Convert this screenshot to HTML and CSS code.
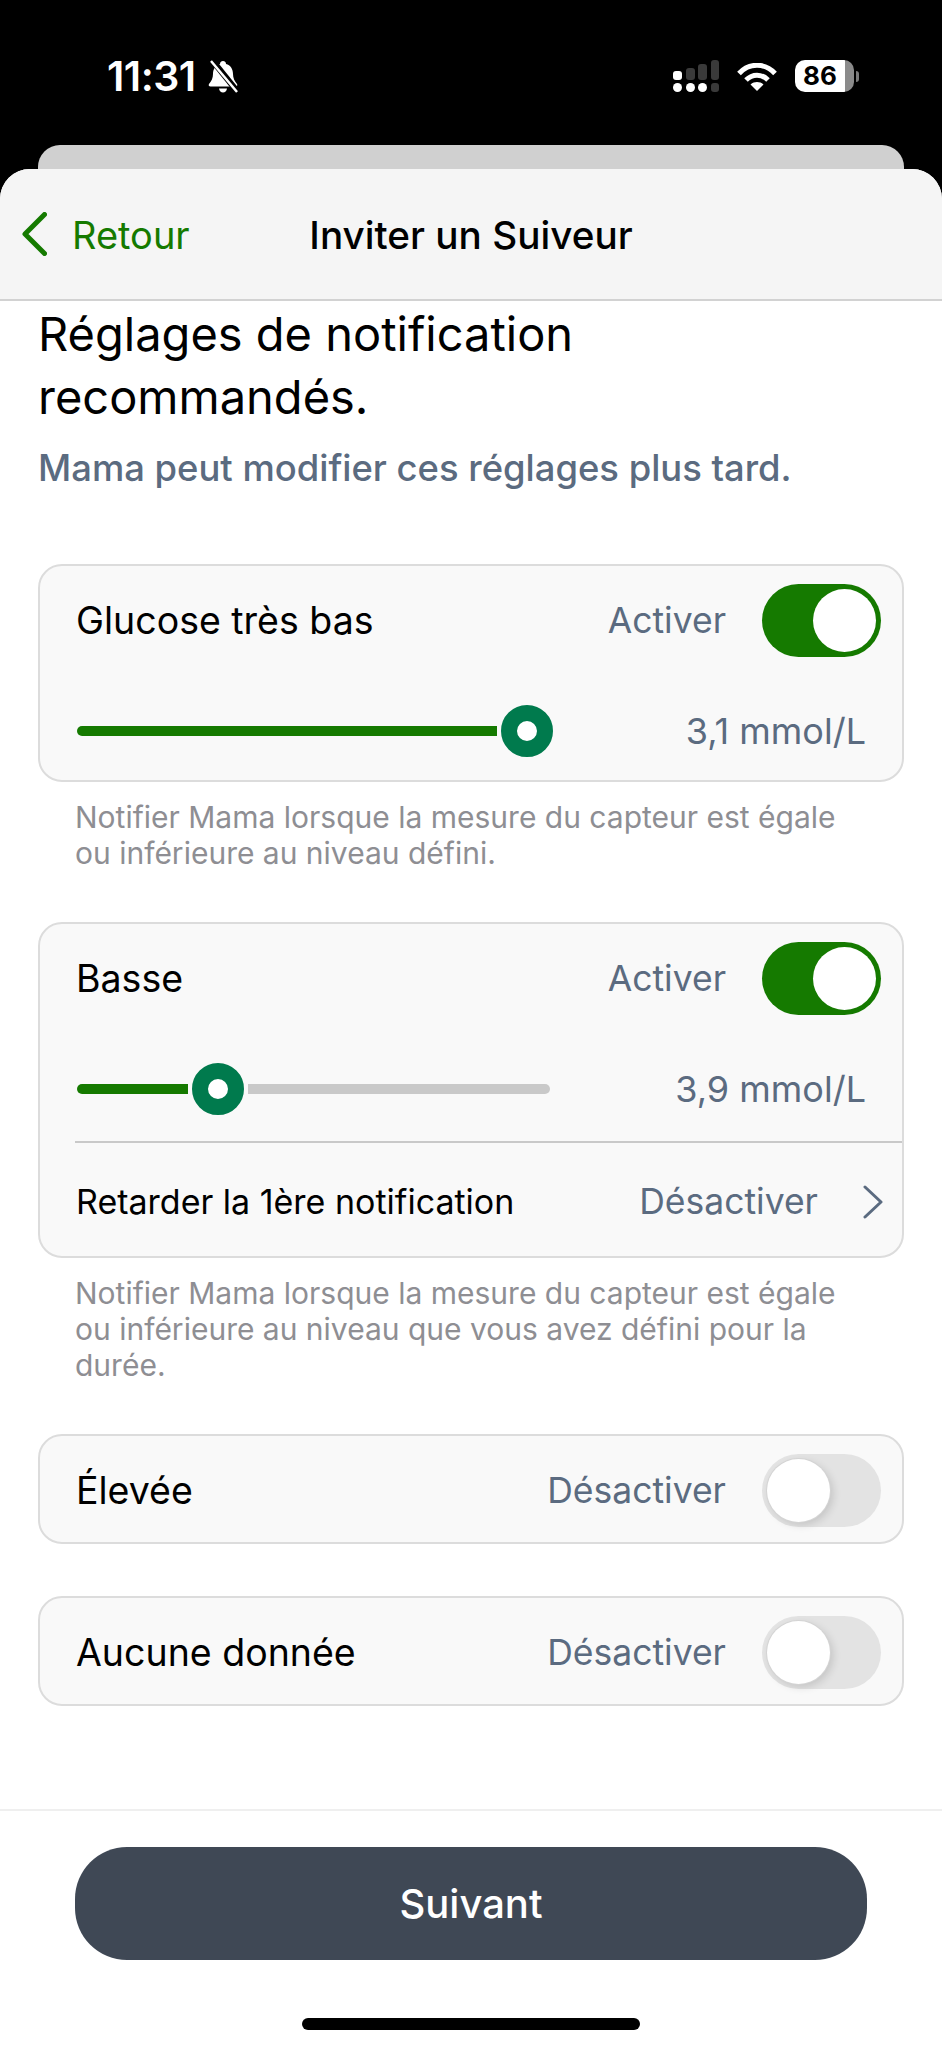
FILE: index.html
```html
<!DOCTYPE html>
<html lang="fr">
<head>
    <meta charset="UTF-8">
    <meta name="viewport" content="width=device-width, initial-scale=1.0">
    <title>Inviter un Suiveur</title>
    <link rel="stylesheet" href="styles.css">
</head>
<body>
    <!-- Status bar -->
    <div class="status-bar">
        <div class="status-left">
            <span class="clock">11:31</span>
            <svg class="bell" viewBox="0 0 30 33" width="30" height="33">
                <path fill="#fff" d="M15 1c2 0 3 1.400 3 3 4.500 1.200 7 5 7 10 0 4 1.500 7 4 10 .8 1.200 0 2.500-1.500 2.500H2.500C1 26.500.2 25.200 1 24c2.500-3 4-6 4-10 0-5 2.500-8.800 7-10 0-1.600 1-3 3-3z"/>
                <path fill="#fff" d="M11 28.500h8c-.4 2.500-2 4-4 4s-3.600-1.500-4-4z"/>
                <path stroke="#000" stroke-width="6" d="M4 0l25 31"/>
                <path stroke="#fff" stroke-width="2.500" d="M3 1l26 31"/>
            </svg>
        </div>
        <div class="status-right">
            <svg class="signal" viewBox="0 0 46 32" width="46" height="32">
                <rect x="0" y="11" width="9" height="9" rx="3" fill="#fff"/>
                <rect x="13" y="8" width="9" height="12" rx="3" fill="#3a3a3a"/>
                <rect x="25" y="4" width="9" height="16" rx="3" fill="#3a3a3a"/>
                <rect x="38" y="0" width="8" height="20" rx="3" fill="#3a3a3a"/>
                <circle cx="4.500" cy="27.500" r="4.500" fill="#fff"/>
                <circle cx="17.500" cy="27.500" r="4.500" fill="#fff"/>
                <circle cx="29.500" cy="27.500" r="4.500" fill="#fff"/>
                <rect x="38" y="23" width="8" height="9" rx="3" fill="#3a3a3a"/>
            </svg>
            <svg class="wifi" viewBox="0 0 40 28" width="40" height="28">
                <path fill="none" stroke="#fff" stroke-width="5" d="M2 10.500C12-.5 28-.5 38 10.500"/>
                <path fill="none" stroke="#fff" stroke-width="5" d="M9 17c6.500-6.500 15.500-6.500 22 0"/>
                <path fill="#fff" d="M13.500 21.500c4-3.200 9-3.200 13 0L20 28z"/>
            </svg>
            <div class="battery">
                <div class="battery-body">86</div>
                <div class="battery-tip"></div>
            </div>
        </div>
    </div>

    <div class="sheet-behind"></div>

    <div class="sheet">
        <div class="nav-bar">
            <svg class="back-icon" viewBox="0 0 25 44" width="25" height="44">
                <path fill="none" stroke="#157a00" stroke-width="5" stroke-linecap="round" stroke-linejoin="round" d="M22.500 2.500L3 22l19.500 19.500"/>
            </svg>
            <span class="back-label">Retour</span>
            <span class="nav-title">Inviter un Suiveur</span>
        </div>

        <div class="content">
            <h1>Réglages de notification recommandés.</h1>
            <p class="subtitle">Mama peut modifier ces réglages plus tard.</p>

            <!-- Glucose tres bas -->
            <div class="card card-first">
                <div class="row-top">
                    <span class="label">Glucose très bas</span>
                    <span class="state">Activer</span>
                    <div class="toggle on"><div class="toggle-knob"></div></div>
                </div>
                <div class="row-slider">
                    <div class="slider">
                        <div class="track-fill" style="width: 420px"></div>
                        <div class="slider-knob"></div>
                    </div>
                    <span class="value">3,1 mmol/L</span>
                </div>
            </div>
            <p class="note">Notifier Mama lorsque la mesure du capteur est égale<br>ou inférieure au niveau défini.</p>

            <!-- Basse -->
            <div class="card card-second">
                <div class="row-top">
                    <span class="label">Basse</span>
                    <span class="state">Activer</span>
                    <div class="toggle on"><div class="toggle-knob"></div></div>
                </div>
                <div class="row-slider">
                    <div class="slider">
                        <div class="track-fill" style="width: 111px"></div>
                        <div class="slider-knob"></div>
                        <div class="track-rest"></div>
                    </div>
                    <span class="value">3,9 mmol/L</span>
                </div>
                <div class="row-delay">
                    <span class="label label-small">Retarder la 1ère notification</span>
                    <span class="state">Désactiver</span>
                    <svg class="chevron" viewBox="0 0 20 34" width="20" height="34">
                        <path fill="none" stroke="#5b6b80" stroke-width="3" stroke-linecap="round" stroke-linejoin="round" d="M2 2l16 15L2 32"/>
                    </svg>
                </div>
            </div>
            <p class="note">Notifier Mama lorsque la mesure du capteur est égale<br>ou inférieure au niveau que vous avez défini pour la<br>durée.</p>

            <!-- Elevee / Aucune donnee -->
            <div class="card card-simple card-third">
                <span class="label">Élevée</span>
                <span class="state">Désactiver</span>
                <div class="toggle"><div class="toggle-knob"></div></div>
            </div>
            <div class="card card-simple card-fourth">
                <span class="label">Aucune donnée</span>
                <span class="state">Désactiver</span>
                <div class="toggle"><div class="toggle-knob"></div></div>
            </div>
        </div>

        <div class="footer">
            <button type="button" class="next-button">Suivant</button>
            <div class="home-bar"></div>
        </div>
    </div>
</body>
</html>
```

FILE: styles.css
```css
/* Global */
* {
    box-sizing: border-box;
}

body {
    margin: 0;
    width: 942px;
    height: 2048px;
    overflow: hidden;
    background: #000;
    font-family: Inter, "Noto Sans", sans-serif;
    color: #000;
}

/* Status bar */
.status-bar {
    height: 145px;
    padding: 60px 83px 0 107px;
    display: flex;
    justify-content: space-between;
    align-items: flex-start;
    color: #fff;
}

.status-left {
    display: flex;
    align-items: center;
    gap: 12px;
    height: 33px;
}

.clock {
    font-size: 41px;
    font-weight: 600;
    line-height: 33px;
    letter-spacing: -0.5px;
}

.status-right {
    display: flex;
    align-items: flex-start;
    gap: 18px;
}

.wifi {
    margin-top: 3px;
}

.battery {
    display: flex;
    align-items: center;
    height: 32px;
}

.battery-body {
    width: 59px;
    height: 32px;
    padding-right: 9px;
    border-radius: 10px;
    background: linear-gradient(to right, #fff 50px, #8a8a8a 50px);
    color: #000;
    font-size: 26px;
    font-weight: 700;
    line-height: 32px;
    text-align: center;
}

.battery-tip {
    width: 3px;
    height: 11px;
    margin-left: 2px;
    border-radius: 0 3px 3px 0;
    background: #7a7a7a;
}

/* Sheets */
.sheet-behind {
    height: 24px;
    margin: 0 38px;
    border-radius: 22px 22px 0 0;
    background: #d0d0d0;
}

.sheet {
    height: 1879px;
    border-radius: 30px 30px 0 0;
    background: #fff;
    overflow: hidden;
    display: flex;
    flex-direction: column;
}

/* Nav */
.nav-bar {
    position: relative;
    height: 132px;
    padding: 20px 0 0 22px;
    display: flex;
    align-items: flex-start;
    background: #f5f5f5;
    border-bottom: 2px solid #d2d2d2;
}

.back-icon {
    margin-top: 23px;
}

.back-label {
    margin-left: 25px;
    font-size: 38px;
    line-height: 92px;
    color: #157a00;
}

.nav-title {
    position: absolute;
    left: 0;
    right: 0;
    top: 20px;
    text-align: center;
    font-size: 38.700px;
    font-weight: 500;
    line-height: 92px;
}

/* Content */
.content {
    height: 1508px;
    padding: 1px 38px 0;
}

h1 {
    margin: 0;
    width: 620px;
    font-size: 47px;
    font-weight: 400;
    line-height: 63px;
}

.subtitle {
    margin: 20px 0 0;
    font-size: 36.400px;
    font-weight: 500;
    line-height: 40px;
    color: #5b6b80;
}

.card {
    border: 2px solid #dcdcdc;
    border-radius: 24px;
    background: #f9f9f9;
}

.card-first {
    margin-top: 76px;
    height: 218px;
}

.card-second {
    margin-top: 51px;
    height: 336px;
}

.card-simple {
    height: 110px;
    padding: 3px 21px 0 36px;
    display: flex;
    align-items: center;
}

.card-third {
    margin-top: 51px;
}

.card-fourth {
    margin-top: 52px;
}

.row-top {
    height: 73px;
    margin-top: 18px;
    padding: 0 21px 0 36px;
    display: flex;
    align-items: center;
}

.label {
    flex: 1;
    font-size: 37.500px;
    line-height: 44px;
}

.label-small {
    font-size: 34px;
}

.state {
    font-size: 35.500px;
    line-height: 44px;
    color: #5b6b80;
}

.value {
    font-size: 36px;
    line-height: 44px;
    color: #5b6b80;
}

/* Toggle */
.toggle {
    width: 119px;
    height: 73px;
    margin-left: 36px;
    padding: 5px;
    border-radius: 37px;
    background: #e3e3e3;
}

.toggle.on {
    background: #157a00;
    display: flex;
    justify-content: flex-end;
}

.toggle-knob {
    width: 63px;
    height: 63px;
    border-radius: 50%;
    background: #fff;
    box-shadow: 0 0 0 1px #d4d4d4, 3px 3px 8px rgba(0, 0, 0, 0.14);
}

.toggle.on .toggle-knob {
    box-shadow: none;
}

/* Slider */
.row-slider {
    height: 51px;
    margin-top: 48px;
    padding: 0 36px 0 37px;
    display: flex;
    align-items: center;
    justify-content: space-between;
}

.slider {
    flex: none;
    width: 473px;
    display: flex;
    align-items: center;
}

.track-fill {
    flex: none;
    height: 10px;
    border-radius: 5px 0 0 5px;
    background: #157a00;
}

.track-rest {
    flex: 1;
    height: 10px;
    border-radius: 0 5px 5px 0;
    background: #c9c9c9;
}

.slider-knob {
    flex: none;
    width: 52px;
    height: 52px;
    margin: 0 4px;
    border: 16px solid #007a4d;
    border-radius: 50%;
    background: #fff;
}

.row-delay {
    height: 113px;
    margin: 27px 0 0 35px;
    padding: 7px 19px 0 1px;
    display: flex;
    align-items: center;
    border-top: 2px solid #c9c9c9;
}

.chevron {
    margin-left: 45px;
}

/* Notes */
.note {
    margin: 17px 0 0;
    padding-left: 37px;
    font-size: 30px;
    line-height: 36px;
    color: #8e8e93;
}

/* Footer */
.footer {
    flex: 1;
    padding-top: 36px;
    border-top: 2px solid #efefef;
    display: flex;
    flex-direction: column;
    align-items: center;
}

.next-button {
    width: 792px;
    height: 113px;
    border: none;
    border-radius: 52px;
    background: #3f4855;
    color: #fff;
    font-family: inherit;
    font-size: 40px;
    font-weight: 500;
}

.home-bar {
    width: 338px;
    height: 12px;
    margin-top: 58px;
    border-radius: 6px;
    background: #000;
}
```
